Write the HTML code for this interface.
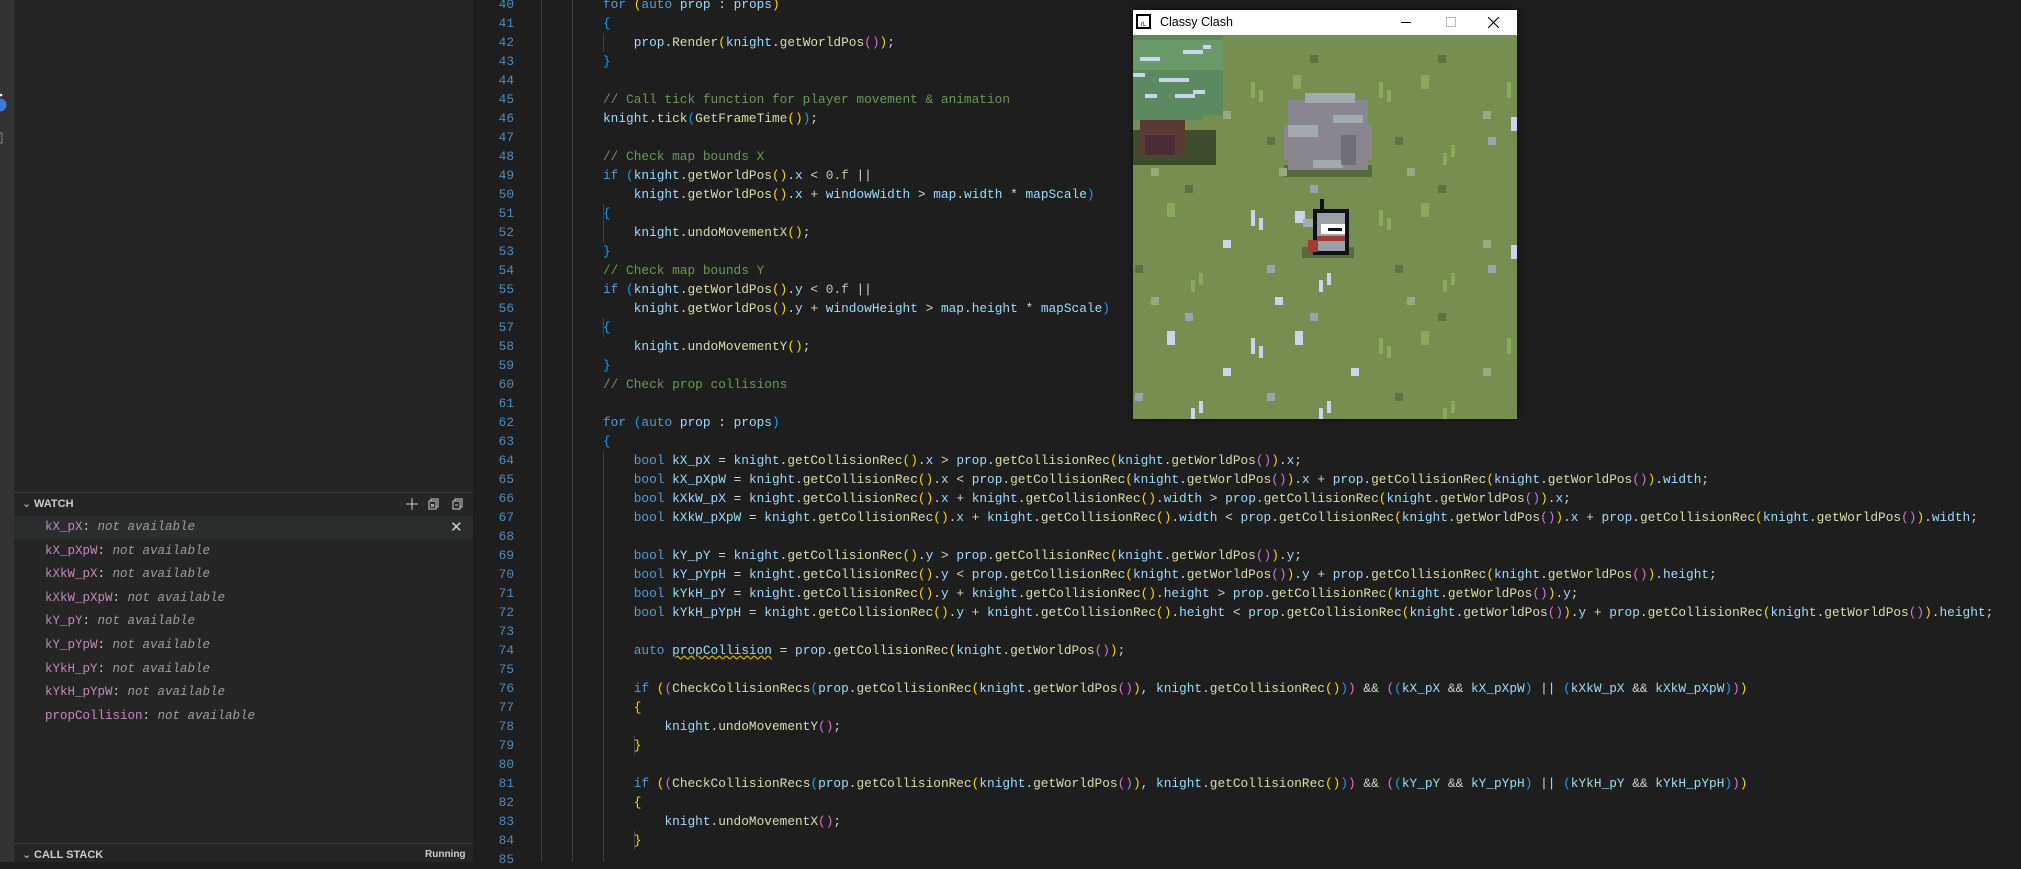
<!DOCTYPE html>
<html><head><meta charset="utf-8"><style>
*{margin:0;padding:0;box-sizing:border-box}
body{width:2021px;height:862px;overflow:hidden;background:#1e1e1e;position:relative;font-family:"Liberation Sans",sans-serif}
#act{position:absolute;left:0;top:0;width:14px;height:862px;background:#333}
#side{position:absolute;left:14px;top:0;width:459px;height:862px;background:#252526}
.hdr{position:absolute;left:0;width:459px;height:22px;border-top:1px solid #3c3c3c;color:#ccc;font-size:11px;font-weight:bold;line-height:22px}
.row{position:absolute;left:0;width:459px;height:23px;line-height:23px;font-family:"Liberation Mono",monospace;font-size:12.5px;padding-left:31px;white-space:pre}
.row .nm{color:#c586c0}.row .na{color:#9d9d9d;font-style:italic}.row .co{color:#ccc}
#ed{position:absolute;left:473px;top:0;width:1548px;height:862px;background:#1e1e1e}
.ln{position:absolute;left:473px;width:41px;text-align:right;font-family:"Liberation Mono",monospace;font-size:12.8px;color:#4d8cbf;height:19px;line-height:19px}
.cl{position:absolute;left:603px;height:19px;line-height:19px;font-family:"Liberation Mono",monospace;font-size:12.8px;color:#d4d4d4;white-space:pre}
.g{position:absolute;width:1px;background:#404040}
k{color:#569cd6}v{color:#9cdcfe}f{color:#dcdcaa}c{color:#6a9955}n{color:#b5cea8}y{color:#ffd700}m{color:#da70d6}w{color:#179fff}
#win{position:absolute;left:1133px;top:10px;width:384px;height:409px;background:#fff;box-shadow:0 0 6px rgba(0,0,0,.5)}
</style></head><body>
<div id="act"></div>
<svg style="position:absolute;left:0;top:0" width="14" height="150"><circle cx="0" cy="105" r="6.5" fill="#3a7bd5"/><circle cx="1" cy="95" r="1.3" fill="#fff"/><rect x="-3" y="133" width="5" height="10" fill="none" stroke="#888" stroke-width="1"/></svg>
<div id="side">
 <div class="hdr" style="top:492px"><span style="position:absolute;left:8px;font-weight:normal">&#8964;</span><span style="position:absolute;left:20px">WATCH</span>
  <svg style="position:absolute;left:390px;top:4px" width="64" height="14" fill="none" stroke="#ccc" stroke-width="1"><path d="M2 7h12M8 1v12"/><rect x="25" y="4" width="7" height="8"/><path d="M27 4V2h7v8h-2M27 7l3 3M30 7l-3 3"/><rect x="49" y="4" width="7" height="8"/><path d="M51 4V2h7v8h-2M51 8h3"/></svg>
 </div>
 <div class="row" style="top:516px;background:#2a2d2e"><span class="nm">kX_pX</span><span class="co">: </span><span class="na">not available</span><span style="position:absolute;left:436px;color:#ccc;font-family:'Liberation Sans';font-size:15px">&#10005;</span></div>
 <div class="row" style="top:539.6px"><span class="nm">kX_pXpW</span><span class="co">: </span><span class="na">not available</span></div>
 <div class="row" style="top:563.2px"><span class="nm">kXkW_pX</span><span class="co">: </span><span class="na">not available</span></div>
 <div class="row" style="top:586.8px"><span class="nm">kXkW_pXpW</span><span class="co">: </span><span class="na">not available</span></div>
 <div class="row" style="top:610.4px"><span class="nm">kY_pY</span><span class="co">: </span><span class="na">not available</span></div>
 <div class="row" style="top:634px"><span class="nm">kY_pYpW</span><span class="co">: </span><span class="na">not available</span></div>
 <div class="row" style="top:657.6px"><span class="nm">kYkH_pY</span><span class="co">: </span><span class="na">not available</span></div>
 <div class="row" style="top:681.2px"><span class="nm">kYkH_pYpW</span><span class="co">: </span><span class="na">not available</span></div>
 <div class="row" style="top:704.8px"><span class="nm">propCollision</span><span class="co">: </span><span class="na">not available</span></div>
 <div class="hdr" style="top:843px"><span style="position:absolute;left:8px;font-weight:normal">&#8964;</span><span style="position:absolute;left:20px">CALL STACK</span><span style="position:absolute;left:411px;font-size:10px">Running</span></div>
</div>
<div id="ed"></div>
<div class="g" style="left:541px;top:0;height:862px"></div>
<div class="g" style="left:572px;top:0;height:862px"></div>
<div class="g" style="left:603px;top:33px;height:19px"></div>
<div class="g" style="left:603px;top:204px;height:38px"></div>
<div class="g" style="left:603px;top:318px;height:19px"></div>
<div class="g" style="left:603px;top:451px;height:411px"></div>
<div class="g" style="left:634px;top:736px;height:19px"></div>
<div class="g" style="left:634px;top:831px;height:19px"></div>

<div class="ln" style="top:-5.5px">40</div><div class="cl" style="top:-5.5px"><k>for</k> <y>(</y><k>auto</k> <v>prop</v> : <v>props</v><y>)</y></div>
<div class="ln" style="top:13.5px">41</div><div class="cl" style="top:13.5px"><w>{</w></div>
<div class="ln" style="top:32.5px">42</div><div class="cl" style="top:32.5px">    <v>prop</v>.<f>Render</f><y>(</y><v>knight</v>.<f>getWorldPos</f><m>()</m><y>)</y>;</div>
<div class="ln" style="top:51.5px">43</div><div class="cl" style="top:51.5px"><w>}</w></div>
<div class="ln" style="top:70.5px">44</div>
<div class="ln" style="top:89.5px">45</div><div class="cl" style="top:89.5px"><c>// Call tick function for player movement &amp; animation</c></div>
<div class="ln" style="top:108.5px">46</div><div class="cl" style="top:108.5px"><v>knight</v>.<f>tick</f><w>(</w><f>GetFrameTime</f><y>()</y><w>)</w>;</div>
<div class="ln" style="top:127.5px">47</div>
<div class="ln" style="top:146.5px">48</div><div class="cl" style="top:146.5px"><c>// Check map bounds X</c></div>
<div class="ln" style="top:165.5px">49</div><div class="cl" style="top:165.5px"><k>if</k> <w>(</w><v>knight</v>.<f>getWorldPos</f><y>()</y>.<v>x</v> &lt; <n>0.f</n> ||</div>
<div class="ln" style="top:184.5px">50</div><div class="cl" style="top:184.5px">    <v>knight</v>.<f>getWorldPos</f><y>()</y>.<v>x</v> + <v>windowWidth</v> &gt; <v>map</v>.<v>width</v> * <v>mapScale</v><w>)</w></div>
<div class="ln" style="top:203.5px">51</div><div class="cl" style="top:203.5px"><w>{</w></div>
<div class="ln" style="top:222.5px">52</div><div class="cl" style="top:222.5px">    <v>knight</v>.<f>undoMovementX</f><y>()</y>;</div>
<div class="ln" style="top:241.5px">53</div><div class="cl" style="top:241.5px"><w>}</w></div>
<div class="ln" style="top:260.5px">54</div><div class="cl" style="top:260.5px"><c>// Check map bounds Y</c></div>
<div class="ln" style="top:279.5px">55</div><div class="cl" style="top:279.5px"><k>if</k> <w>(</w><v>knight</v>.<f>getWorldPos</f><y>()</y>.<v>y</v> &lt; <n>0.f</n> ||</div>
<div class="ln" style="top:298.5px">56</div><div class="cl" style="top:298.5px">    <v>knight</v>.<f>getWorldPos</f><y>()</y>.<v>y</v> + <v>windowHeight</v> &gt; <v>map</v>.<v>height</v> * <v>mapScale</v><w>)</w></div>
<div class="ln" style="top:317.5px">57</div><div class="cl" style="top:317.5px"><w>{</w></div>
<div class="ln" style="top:336.5px">58</div><div class="cl" style="top:336.5px">    <v>knight</v>.<f>undoMovementY</f><y>()</y>;</div>
<div class="ln" style="top:355.5px">59</div><div class="cl" style="top:355.5px"><w>}</w></div>
<div class="ln" style="top:374.5px">60</div><div class="cl" style="top:374.5px"><c>// Check prop collisions</c></div>
<div class="ln" style="top:393.5px">61</div>
<div class="ln" style="top:412.5px">62</div><div class="cl" style="top:412.5px"><k>for</k> <w>(</w><k>auto</k> <v>prop</v> : <v>props</v><w>)</w></div>
<div class="ln" style="top:431.5px">63</div><div class="cl" style="top:431.5px"><w>{</w></div>
<div class="ln" style="top:450.5px">64</div><div class="cl" style="top:450.5px">    <k>bool</k> <v>kX_pX</v> = <v>knight</v>.<f>getCollisionRec</f><y>()</y>.<v>x</v> &gt; <v>prop</v>.<f>getCollisionRec</f><y>(</y><v>knight</v>.<f>getWorldPos</f><m>()</m><y>)</y>.<v>x</v>;</div>
<div class="ln" style="top:469.5px">65</div><div class="cl" style="top:469.5px">    <k>bool</k> <v>kX_pXpW</v> = <v>knight</v>.<f>getCollisionRec</f><y>()</y>.<v>x</v> &lt; <v>prop</v>.<f>getCollisionRec</f><y>(</y><v>knight</v>.<f>getWorldPos</f><m>()</m><y>)</y>.<v>x</v> + <v>prop</v>.<f>getCollisionRec</f><y>(</y><v>knight</v>.<f>getWorldPos</f><m>()</m><y>)</y>.<v>width</v>;</div>
<div class="ln" style="top:488.5px">66</div><div class="cl" style="top:488.5px">    <k>bool</k> <v>kXkW_pX</v> = <v>knight</v>.<f>getCollisionRec</f><y>()</y>.<v>x</v> + <v>knight</v>.<f>getCollisionRec</f><y>()</y>.<v>width</v> &gt; <v>prop</v>.<f>getCollisionRec</f><y>(</y><v>knight</v>.<f>getWorldPos</f><m>()</m><y>)</y>.<v>x</v>;</div>
<div class="ln" style="top:507.5px">67</div><div class="cl" style="top:507.5px">    <k>bool</k> <v>kXkW_pXpW</v> = <v>knight</v>.<f>getCollisionRec</f><y>()</y>.<v>x</v> + <v>knight</v>.<f>getCollisionRec</f><y>()</y>.<v>width</v> &lt; <v>prop</v>.<f>getCollisionRec</f><y>(</y><v>knight</v>.<f>getWorldPos</f><m>()</m><y>)</y>.<v>x</v> + <v>prop</v>.<f>getCollisionRec</f><y>(</y><v>knight</v>.<f>getWorldPos</f><m>()</m><y>)</y>.<v>width</v>;</div>
<div class="ln" style="top:526.5px">68</div>
<div class="ln" style="top:545.5px">69</div><div class="cl" style="top:545.5px">    <k>bool</k> <v>kY_pY</v> = <v>knight</v>.<f>getCollisionRec</f><y>()</y>.<v>y</v> &gt; <v>prop</v>.<f>getCollisionRec</f><y>(</y><v>knight</v>.<f>getWorldPos</f><m>()</m><y>)</y>.<v>y</v>;</div>
<div class="ln" style="top:564.5px">70</div><div class="cl" style="top:564.5px">    <k>bool</k> <v>kY_pYpH</v> = <v>knight</v>.<f>getCollisionRec</f><y>()</y>.<v>y</v> &lt; <v>prop</v>.<f>getCollisionRec</f><y>(</y><v>knight</v>.<f>getWorldPos</f><m>()</m><y>)</y>.<v>y</v> + <v>prop</v>.<f>getCollisionRec</f><y>(</y><v>knight</v>.<f>getWorldPos</f><m>()</m><y>)</y>.<v>height</v>;</div>
<div class="ln" style="top:583.5px">71</div><div class="cl" style="top:583.5px">    <k>bool</k> <v>kYkH_pY</v> = <v>knight</v>.<f>getCollisionRec</f><y>()</y>.<v>y</v> + <v>knight</v>.<f>getCollisionRec</f><y>()</y>.<v>height</v> &gt; <v>prop</v>.<f>getCollisionRec</f><y>(</y><v>knight</v>.<f>getWorldPos</f><m>()</m><y>)</y>.<v>y</v>;</div>
<div class="ln" style="top:602.5px">72</div><div class="cl" style="top:602.5px">    <k>bool</k> <v>kYkH_pYpH</v> = <v>knight</v>.<f>getCollisionRec</f><y>()</y>.<v>y</v> + <v>knight</v>.<f>getCollisionRec</f><y>()</y>.<v>height</v> &lt; <v>prop</v>.<f>getCollisionRec</f><y>(</y><v>knight</v>.<f>getWorldPos</f><m>()</m><y>)</y>.<v>y</v> + <v>prop</v>.<f>getCollisionRec</f><y>(</y><v>knight</v>.<f>getWorldPos</f><m>()</m><y>)</y>.<v>height</v>;</div>
<div class="ln" style="top:621.5px">73</div>
<div class="ln" style="top:640.5px">74</div><div class="cl" style="top:640.5px">    <k>auto</k> <v style="text-decoration:underline wavy #cca700">propCollision</v> = <v>prop</v>.<f>getCollisionRec</f><y>(</y><v>knight</v>.<f>getWorldPos</f><m>()</m><y>)</y>;</div>
<div class="ln" style="top:659.5px">75</div>
<div class="ln" style="top:678.5px">76</div><div class="cl" style="top:678.5px">    <k>if</k> <y>(</y><m>(</m><f>CheckCollisionRecs</f><w>(</w><v>prop</v>.<f>getCollisionRec</f><y>(</y><v>knight</v>.<f>getWorldPos</f><m>()</m><y>)</y>, <v>knight</v>.<f>getCollisionRec</f><y>()</y><w>)</w><m>)</m> &amp;&amp; <m>(</m><w>(</w><v>kX_pX</v> &amp;&amp; <v>kX_pXpW</v><w>)</w> || <w>(</w><v>kXkW_pX</v> &amp;&amp; <v>kXkW_pXpW</v><w>)</w><m>)</m><y>)</y></div>
<div class="ln" style="top:697.5px">77</div><div class="cl" style="top:697.5px">    <y>{</y></div>
<div class="ln" style="top:716.5px">78</div><div class="cl" style="top:716.5px">        <v>knight</v>.<f>undoMovementY</f><m>()</m>;</div>
<div class="ln" style="top:735.5px">79</div><div class="cl" style="top:735.5px">    <y>}</y></div>
<div class="ln" style="top:754.5px">80</div>
<div class="ln" style="top:773.5px">81</div><div class="cl" style="top:773.5px">    <k>if</k> <y>(</y><m>(</m><f>CheckCollisionRecs</f><w>(</w><v>prop</v>.<f>getCollisionRec</f><y>(</y><v>knight</v>.<f>getWorldPos</f><m>()</m><y>)</y>, <v>knight</v>.<f>getCollisionRec</f><y>()</y><w>)</w><m>)</m> &amp;&amp; <m>(</m><w>(</w><v>kY_pY</v> &amp;&amp; <v>kY_pYpH</v><w>)</w> || <w>(</w><v>kYkH_pY</v> &amp;&amp; <v>kYkH_pYpH</v><w>)</w><m>)</m><y>)</y></div>
<div class="ln" style="top:792.5px">82</div><div class="cl" style="top:792.5px">    <y>{</y></div>
<div class="ln" style="top:811.5px">83</div><div class="cl" style="top:811.5px">        <v>knight</v>.<f>undoMovementX</f><m>()</m>;</div>
<div class="ln" style="top:830.5px">84</div><div class="cl" style="top:830.5px">    <y>}</y></div>
<div class="ln" style="top:849.5px">85</div>

<div id="win">
 <svg style="position:absolute;left:3px;top:4px" width="16" height="16"><rect x="1" y="1" width="13" height="13" fill="#fff" stroke="#000" stroke-width="2"/><text x="5" y="12" font-size="6" font-family="Liberation Sans">rL</text></svg>
 <div style="position:absolute;left:27px;top:5px;font-size:12.5px;color:#000">Classy Clash</div>
 <div style="position:absolute;left:268px;top:12px;width:10px;height:1px;background:#000"></div>
 <div style="position:absolute;left:313px;top:7px;width:10px;height:10px;border:1px solid #bbb"></div>
 <svg style="position:absolute;left:355px;top:7px" width="11" height="11"><path d="M0 0L11 11M11 0L0 11" stroke="#000" stroke-width="1.1"/></svg>
 <svg style="position:absolute;left:0;top:25px" width="384" height="384" shape-rendering="crispEdges">
  <rect width="384" height="384" fill="#768f51"/>
  <rect x="0" y="95" width="83" height="35" fill="#3e4d2d"/>
  <rect x="7" y="78" width="45" height="42" fill="#5b3a33"/><rect x="12" y="100" width="30" height="20" fill="#4a2c35"/>
  <rect x="0" y="0" width="90" height="80" fill="#5b8a60"/><rect x="0" y="70" width="70" height="15" fill="#5b8a60"/>
  <rect x="0" y="5" width="90" height="30" fill="#6b9a6a"/>
  <rect x="7" y="22" width="20" height="4" fill="#c8d4f0"/><rect x="50" y="15" width="20" height="4" fill="#c8d4f0"/><rect x="26" y="43" width="30" height="4" fill="#c8d4f0"/><rect x="0" y="38" width="12" height="4" fill="#c8d4f0"/><rect x="12" y="59" width="12" height="4" fill="#c8d4f0"/><rect x="42" y="59" width="20" height="4" fill="#c8d4f0"/><rect x="60" y="55" width="12" height="4" fill="#c8d4f0"/><rect x="70" y="10" width="8" height="4" fill="#c8d4f0"/>
  <rect x="151" y="130" width="88" height="12" fill="#566a3e"/>
  <rect x="155" y="65" width="80" height="70" fill="#8a8690"/><rect x="172" y="58" width="50" height="10" fill="#a0aab0"/><rect x="151" y="90" width="88" height="35" fill="#8a8690"/>
  <rect x="155" y="90" width="30" height="12" fill="#a0aab0"/><rect x="200" y="80" width="30" height="8" fill="#a0aab0"/><rect x="180" y="125" width="30" height="8" fill="#a0aab0"/><rect x="208" y="100" width="15" height="30" fill="#6f7076"/>
  <rect x="169" y="212" width="52" height="11" fill="#566a3e"/>
  <rect x="180" y="174" width="36" height="46" fill="#111"/><rect x="184" y="178" width="28" height="38" fill="#9aa0a8"/>
  <rect x="188" y="189" width="24" height="10" fill="#fff"/><rect x="195" y="193" width="14" height="3" fill="#111"/><rect x="184" y="201" width="28" height="5" fill="#a33a35"/><rect x="175" y="205" width="10" height="12" fill="#a33a35"/><rect x="187" y="164" width="4" height="10" fill="#111"/>
  <rect x="162" y="176" width="10" height="12" fill="#c8d4f0"/><rect x="170" y="184" width="10" height="8" fill="#a0aab0"/>
  <g fill="#8aa95a"><rect x="118" y="47" width="4" height="16"/><rect x="126" y="55" width="4" height="12"/><rect x="246" y="47" width="4" height="16"/><rect x="254" y="55" width="4" height="12"/><rect x="374" y="47" width="4" height="16"/><rect x="160" y="40" width="8" height="14"/><rect x="288" y="40" width="8" height="14"/><rect x="34" y="168" width="8" height="14"/><rect x="288" y="168" width="8" height="14"/><rect x="246" y="175" width="4" height="16"/><rect x="254" y="183" width="4" height="12"/><rect x="310" y="118" width="4" height="12"/><rect x="318" y="110" width="4" height="12"/><rect x="58" y="245" width="4" height="12"/><rect x="66" y="238" width="4" height="12"/><rect x="310" y="245" width="4" height="12"/><rect x="318" y="238" width="4" height="12"/><rect x="246" y="303" width="4" height="16"/><rect x="254" y="311" width="4" height="12"/><rect x="288" y="296" width="8" height="14"/><rect x="374" y="303" width="4" height="16"/><rect x="310" y="373" width="4" height="11"/><rect x="318" y="366" width="4" height="12"/></g>
  <g fill="#c8d4f0"><rect x="118" y="175" width="4" height="16"/><rect x="126" y="183" width="4" height="12"/><rect x="186" y="245" width="4" height="12"/><rect x="194" y="238" width="4" height="12"/><rect x="34" y="296" width="8" height="14"/><rect x="118" y="303" width="4" height="16"/><rect x="126" y="311" width="4" height="12"/><rect x="162" y="296" width="8" height="14"/><rect x="378" y="82" width="6" height="14"/><rect x="378" y="210" width="6" height="14"/><rect x="58" y="373" width="4" height="11"/><rect x="66" y="366" width="4" height="12"/><rect x="186" y="373" width="4" height="11"/><rect x="194" y="366" width="4" height="12"/><rect x="90" y="205" width="8" height="8"/><rect x="142" y="262" width="8" height="8"/><rect x="90" y="333" width="8" height="8"/><rect x="218" y="333" width="8" height="8"/></g>
  <g fill="#5a7340"><rect x="177" y="20" width="8" height="8"/><rect x="305" y="20" width="8" height="8"/><rect x="134" y="102" width="8" height="8"/><rect x="262" y="102" width="8" height="8"/><rect x="52" y="150" width="8" height="8"/><rect x="305" y="150" width="8" height="8"/><rect x="2" y="230" width="8" height="8"/><rect x="262" y="230" width="8" height="8"/><rect x="305" y="278" width="8" height="8"/><rect x="262" y="358" width="8" height="8"/></g>
  <g fill="#98ab80"><rect x="90" y="76" width="8" height="8"/><rect x="18" y="133" width="8" height="8"/><rect x="146" y="133" width="8" height="8"/><rect x="274" y="133" width="8" height="8"/><rect x="350" y="76" width="8" height="8"/><rect x="18" y="262" width="8" height="8"/><rect x="274" y="262" width="8" height="8"/><rect x="350" y="205" width="8" height="8"/><rect x="350" y="333" width="8" height="8"/></g>
  <g fill="#9aa3ad"><rect x="177" y="150" width="8" height="8"/><rect x="134" y="230" width="8" height="8"/><rect x="355" y="102" width="8" height="8"/><rect x="355" y="230" width="8" height="8"/><rect x="52" y="278" width="8" height="8"/><rect x="177" y="278" width="8" height="8"/><rect x="2" y="358" width="8" height="8"/><rect x="134" y="358" width="8" height="8"/></g>
 </svg>
</div>
</body></html>
